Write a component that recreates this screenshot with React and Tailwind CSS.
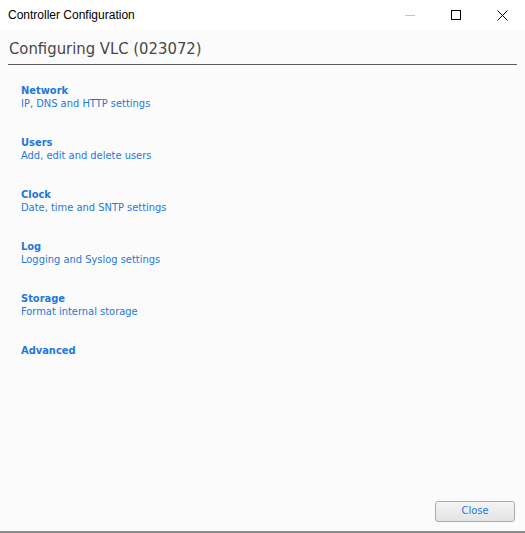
const sections = [
  { title: "Network", desc: "IP, DNS and HTTP settings" },
  { title: "Users", desc: "Add, edit and delete users" },
  { title: "Clock", desc: "Date, time and SNTP settings" },
  { title: "Log", desc: "Logging and Syslog settings" },
  { title: "Storage", desc: "Format internal storage" },
  { title: "Advanced", desc: null },
];

export default function App() {
  return (
    <div className="w-[525px] h-[533px] flex flex-col bg-[#fbfbfb] font-['DejaVu_Sans_Condensed',Tahoma,sans-serif] overflow-hidden border-b-[2px] border-[#8a8a8a]">
      {/* Title bar */}
      <div className="h-[30px] bg-white flex items-center shrink-0">
        <span className="pl-[8px] text-[12px] text-black flex-1 font-['Liberation_Sans',sans-serif]">Controller Configuration</span>
        <div className="flex h-full">
          <div className="w-[46px] flex items-center justify-center">
            <div className="w-[10px] h-px bg-[#c4c4c4]" />
          </div>
          <div className="w-[46px] flex items-center justify-center">
            <div className="w-[10px] h-[10px] border border-black" />
          </div>
          <div className="w-[46px] flex items-center justify-center">
            <svg width="11" height="11" viewBox="0 0 11 11" stroke="black" strokeWidth="1">
              <path d="M0.5 0.5 L10.5 10.5 M10.5 0.5 L0.5 10.5" />
            </svg>
          </div>
        </div>
      </div>

      {/* Header */}
      <div className="mx-[8px] mt-[8px] border-b border-[#5a5a5a] pb-[4px]">
        <h1 className="text-[16.5px] text-[#474747] leading-[22px] pl-[1px]">Configuring VLC (023072)</h1>
      </div>

      {/* Section list */}
      <div className="flex-1 flex flex-col gap-[13px] pl-[21px] pt-[19px]">
        {sections.map((s) => (
          <div key={s.title} className="h-[39px] flex flex-col">
            <span className="text-[11px] leading-[13px] font-bold text-[#1f78d8]">{s.title}</span>
            {s.desc && (
              <span className="text-[11px] leading-[13px] text-[#1f78d8]">{s.desc}</span>
            )}
          </div>
        ))}
      </div>

      {/* Footer */}
      <div className="flex justify-end pr-[10px] pb-[9px]">
        <button className="w-[80px] h-[21px] rounded-[3px] border border-[#acacac] bg-gradient-to-b from-[#f4f4f4] to-[#e4e4e4] text-[11px] text-[#1f78d8]">
          Close
        </button>
      </div>
    </div>
  );
}
